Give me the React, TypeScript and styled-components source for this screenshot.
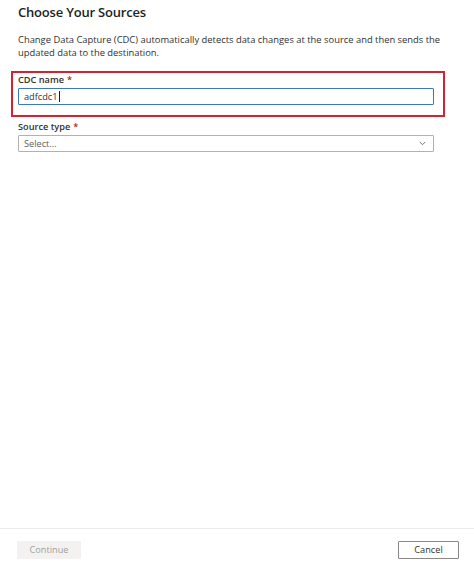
import React from "react";
import styled, { createGlobalStyle } from "styled-components";

const Global = createGlobalStyle`
  html, body { margin: 0; padding: 0; background: #ffffff; }
  body { font-family: "Open Sans", "Noto Sans", "Liberation Sans", sans-serif; color: #323130; }
  * { box-sizing: border-box; }
`;

const Panel = styled.div`
  width: 474px;
  height: 568px;
  display: flex;
  flex-direction: column;
  background: #ffffff;
`;

const Body = styled.div`
  flex: 1;
  padding: 3px 40px 0 18px;
  display: flex;
  flex-direction: column;
`;

const Title = styled.h1`
  margin: 0;
  font-size: 13px;
  line-height: 18px;
  font-weight: 600;
  letter-spacing: -0.2px;
  color: #201f1e;
`;

const Description = styled.p`
  margin: 12px -16px 0 0;
  font-size: 9.4px;
  line-height: 13px;
  color: #323130;
`;

const Highlight = styled.div`
  margin: 12px -11px 0 -7px;
  padding: 0 9px 10px 5px;
  border: 2px solid #d9202e;
`;

const Field = styled.div<{ $gap?: number }>`
  display: flex;
  flex-direction: column;
  margin-top: ${(p) => p.$gap ?? 0}px;
`;

const Label = styled.label`
  font-size: 9.2px;
  line-height: 13px;
  font-weight: 600;
  color: #323130;
  margin-bottom: 2px;
`;

const Required = styled.span`
  color: #a4262c;
  margin-left: 3px;
`;

const TextBox = styled.div<{ $focused?: boolean }>`
  height: 17px;
  border: 1px solid ${(p) => (p.$focused ? "#3b78c3" : "#b3b0ad")};
  border-radius: 1px;
  display: flex;
  align-items: center;
  padding: 0 7px 0 5px;
  font-size: 9.2px;
  color: #323130;
`;

const Caret = styled.span`
  display: inline-block;
  width: 1px;
  height: 11px;
  background: #201f1e;
  margin-left: 1px;
`;

const Placeholder = styled.span`
  flex: 1;
  color: #605e5c;
`;

const Footer = styled.div`
  border-top: 1px solid #ebebeb;
  height: 40px;
  padding: 12px 15px 0 17px;
  display: flex;
  justify-content: space-between;
  align-items: flex-start;
`;

const Button = styled.button<{ $disabled?: boolean }>`
  height: 18px;
  width: ${(p) => (p.$disabled ? 64 : 61)}px;
  font-family: inherit;
  font-size: 9.2px;
  line-height: 16px;
  padding: 0;
  border-radius: 1px;
  border: 1px solid ${(p) => (p.$disabled ? "#f3f2f1" : "#8a8886")};
  background: ${(p) => (p.$disabled ? "#f3f2f1" : "#ffffff")};
  color: ${(p) => (p.$disabled ? "#a19f9d" : "#323130")};
`;

const Chevron = () => (
  <svg width="7" height="5" viewBox="0 0 7 5" fill="none">
    <path d="M0.8 1 L3.5 3.7 L6.2 1" stroke="#605e5c" strokeWidth="0.9" />
  </svg>
);

export default function App() {
  return (
    <>
      <Global />
      <Panel>
        <Body>
          <Title>Choose Your Sources</Title>
          <Description>
            Change Data Capture (CDC) automatically detects data changes at the source and then sends the
            updated data to the destination.
          </Description>
          <Highlight>
            <Field>
              <Label>
                CDC name<Required>*</Required>
              </Label>
              <TextBox $focused>
                adfcdc1
                <Caret />
              </TextBox>
            </Field>
          </Highlight>
          <Field $gap={3}>
            <Label>
              Source type<Required>*</Required>
            </Label>
            <TextBox>
              <Placeholder>Select...</Placeholder>
              <Chevron />
            </TextBox>
          </Field>
        </Body>
        <Footer>
          <Button $disabled disabled>
            Continue
          </Button>
          <Button>Cancel</Button>
        </Footer>
      </Panel>
    </>
  );
}
